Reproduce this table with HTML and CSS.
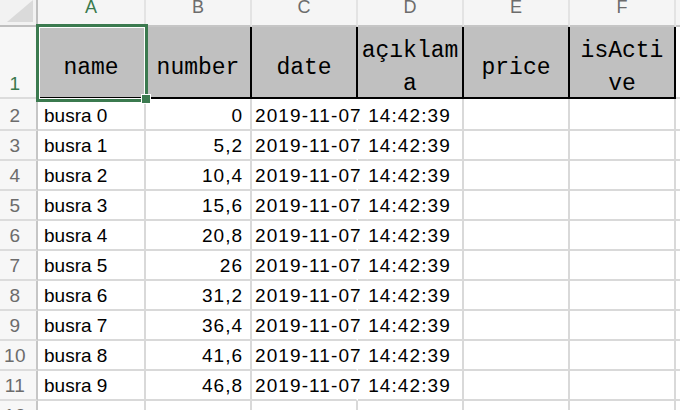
FILE: index.html
```html
<!DOCTYPE html>
<html>
<head>
<meta charset="utf-8">
<link rel="stylesheet" href="styles.css">
</head>
<body>
<div class="sheet">
  <div class="corner"><svg width="36" height="25" viewBox="0 0 36 25"><polygon points="7,22 33,22 33,0" fill="#dadada"/></svg></div>
  <div class="ch on">A</div><div class="ch">B</div><div class="ch">C</div><div class="ch">D</div><div class="ch">E</div><div class="ch">F</div><div class="ch"></div>

  <div class="rh on">1</div>
  <div class="hc">name</div><div class="hc">number</div><div class="hc">date</div><div class="hc">açıklam<wbr>a</div><div class="hc">price</div><div class="hc">isActi<wbr>ve</div><div class="cell"></div>

  <div class="rh">2</div><div class="cell">busra 0</div><div class="cell n">0</div><div class="cell d">2019-11-07 14:42:39</div><div class="cell"></div><div class="cell"></div><div class="cell"></div><div class="cell"></div>
  <div class="rh">3</div><div class="cell">busra 1</div><div class="cell n">5,2</div><div class="cell d">2019-11-07 14:42:39</div><div class="cell"></div><div class="cell"></div><div class="cell"></div><div class="cell"></div>
  <div class="rh">4</div><div class="cell">busra 2</div><div class="cell n">10,4</div><div class="cell d">2019-11-07 14:42:39</div><div class="cell"></div><div class="cell"></div><div class="cell"></div><div class="cell"></div>
  <div class="rh">5</div><div class="cell">busra 3</div><div class="cell n">15,6</div><div class="cell d">2019-11-07 14:42:39</div><div class="cell"></div><div class="cell"></div><div class="cell"></div><div class="cell"></div>
  <div class="rh">6</div><div class="cell">busra 4</div><div class="cell n">20,8</div><div class="cell d">2019-11-07 14:42:39</div><div class="cell"></div><div class="cell"></div><div class="cell"></div><div class="cell"></div>
  <div class="rh">7</div><div class="cell">busra 5</div><div class="cell n">26</div><div class="cell d">2019-11-07 14:42:39</div><div class="cell"></div><div class="cell"></div><div class="cell"></div><div class="cell"></div>
  <div class="rh">8</div><div class="cell">busra 6</div><div class="cell n">31,2</div><div class="cell d">2019-11-07 14:42:39</div><div class="cell"></div><div class="cell"></div><div class="cell"></div><div class="cell"></div>
  <div class="rh">9</div><div class="cell">busra 7</div><div class="cell n">36,4</div><div class="cell d">2019-11-07 14:42:39</div><div class="cell"></div><div class="cell"></div><div class="cell"></div><div class="cell"></div>
  <div class="rh">10</div><div class="cell">busra 8</div><div class="cell n">41,6</div><div class="cell d">2019-11-07 14:42:39</div><div class="cell"></div><div class="cell"></div><div class="cell"></div><div class="cell"></div>
  <div class="rh">11</div><div class="cell">busra 9</div><div class="cell n">46,8</div><div class="cell d">2019-11-07 14:42:39</div><div class="cell"></div><div class="cell"></div><div class="cell"></div><div class="cell"></div>
  <div class="rh">12</div><div class="cell"></div><div class="cell"></div><div class="cell"></div><div class="cell"></div><div class="cell"></div><div class="cell"></div><div class="cell"></div>

  <div class="selection"><span class="handle"></span></div>
</div>
</body>
</html>
```

FILE: styles.css
```css
html, body {
  margin: 0;
  padding: 0;
  background: #fff;
  overflow: hidden;
}

.sheet {
  position: relative;
  display: grid;
  grid-template-columns: 38px 108px repeat(5, 106px) 1fr;
  grid-template-rows: 27px 72px 32px repeat(10, 30px);
  font-family: "Liberation Sans", "Open Sans", sans-serif;
  width: 680px;
}

.sheet > div {
  box-sizing: border-box;
  min-width: 0;
}

.corner {
  background: #f2f2f2;
  border-right: 2px solid #bfbfbf;
  border-bottom: 2px solid #bfbfbf;
  overflow: hidden;
}

.corner svg {
  display: block;
}

.ch {
  background: #f5f5f5;
  border-right: 2px solid #e3e3e3;
  border-bottom: 2px solid #c6c6c6;
  color: #6c6c6c;
  font-size: 18px;
  line-height: 15px;
  text-align: center;
  overflow: hidden;
}

.rh {
  background: #f7f7f7;
  border-right: 2px solid #c6c6c6;
  border-bottom: 2px solid #dcdcdc;
  color: #6c6c6c;
  font-size: 19px;
  line-height: 19px;
  letter-spacing: 0.5px;
  display: flex;
  align-items: flex-end;
  justify-content: center;
  padding: 0 6px 4px 0;
  overflow: hidden;
}

.on {
  color: #3a7a4d;
}

.hc {
  background: #c0c0c0;
  border-right: 2px solid #000;
  border-bottom: 2px solid #000;
  font-family: "Liberation Mono", "DejaVu Sans Mono", monospace;
  font-size: 23px;
  line-height: 33px;
  color: #000;
  display: flex;
  align-items: center;
  justify-content: center;
  text-align: center;
  padding-top: 12px;
}

.cell {
  border-right: 2px solid #d9d9d9;
  border-bottom: 2px solid #d9d9d9;
  font-size: 19px;
  line-height: 19px;
  color: #000;
  display: flex;
  align-items: flex-end;
  padding: 0 8px 4px 6px;
  white-space: nowrap;
  overflow: visible;
}

.cell.n {
  justify-content: flex-end;
  letter-spacing: 1px;
  padding-right: 7px;
}

.cell.d {
  padding-left: 3px;
  letter-spacing: 1.1px;
  border-right-color: transparent;
}

.selection {
  position: absolute;
  left: 36px;
  top: 24px;
  width: 112px;
  height: 78px;
  box-sizing: border-box;
  border: 3px solid #3b7a4f;
  box-shadow: inset 0 0 0 1px #fff;
  pointer-events: none;
}

.handle {
  position: absolute;
  right: -6px;
  bottom: -5px;
  width: 8px;
  height: 8px;
  background: #3b7a4f;
  border: 1px solid #fff;
}
```
